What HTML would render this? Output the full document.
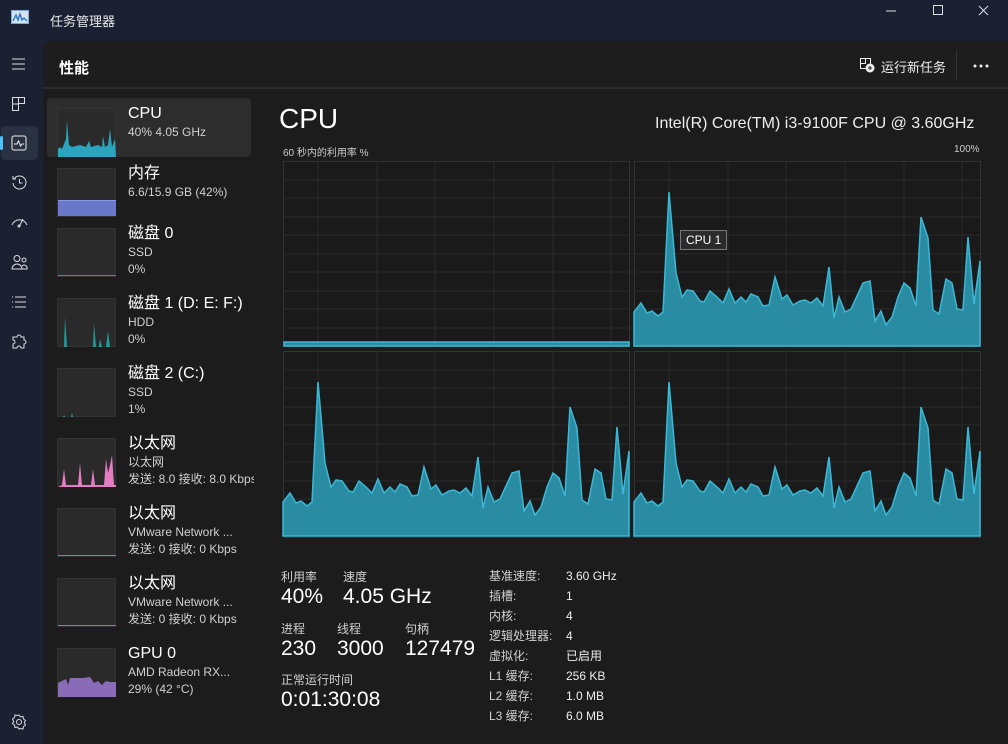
<!DOCTYPE html>
<html><head><meta charset="utf-8">
<style>
*{margin:0;padding:0;box-sizing:border-box}
body{width:1008px;height:744px;overflow:hidden;background:#1b2133;font-family:"Liberation Sans","Noto Sans CJK SC",sans-serif;color:#fff;position:relative}
.abs{position:absolute}
.panel{left:43px;top:41px;width:965px;height:703px;background:#1c1c1c;border-top-left-radius:8px}
.hdr{left:43px;top:41px;width:965px;height:48px;border-bottom:2px solid #2a2a2a;border-top-left-radius:8px;background:#1d1d1d}
.t{position:absolute;white-space:nowrap}
.nav svg{position:absolute;left:11px}
.item .th{position:absolute;left:57px;width:59px;height:49px;background:#2a2a2a;border:1px solid #333}
.item .t{line-height:20px}
.item .sm{line-height:15px}
.sm{font-size:12px;color:#d0d0d0}
.lbl{font-size:12px;color:#d0d0d0}
.big{font-size:21px;color:#fff}
</style></head><body>
<svg class="abs" style="left:11px;top:10px" width="18" height="14"><rect x="0.5" y="0.5" width="17" height="13" fill="#cfe3f5" stroke="#7fa8d0"/><polyline points="2,11 5,5 7,10 9,4 11,10 13,8 16,11" fill="none" stroke="#2a6fc0" stroke-width="1.3"/></svg>
<div class="t" style="left:50px;top:11px;font-size:13px;color:#e8e8e8">任务管理器</div>
<svg class="abs" style="left:886px;top:4px" width="110" height="14" stroke="#ddd" fill="none"><line x1="0" y1="7" x2="10" y2="7"/><rect x="47.5" y="1.5" width="9" height="9"/><path d="M93 2l9 9M102 2l-9 9"/></svg>
<div class="nav">
<svg style="top:57px" width="16" height="14" stroke="#ddd" fill="none"><path d="M1 2h13M1 7h13M1 12h13"/></svg>
<svg style="top:96px" width="16" height="16" stroke="#ddd" fill="none"><path d="M1.5 1.5h6v13h-6zM7.5 1.5h6v6h-6zM1.5 8h6"/></svg>
<div class="abs" style="left:1px;top:126px;width:37px;height:34px;background:#2a3142;border-radius:5px"></div>
<div class="abs" style="left:0;top:136px;width:3px;height:14px;background:#4cc2ff;border-radius:2px"></div>
<svg style="top:135px" width="16" height="16" stroke="#eee" fill="none"><rect x="1" y="1" width="14" height="14" rx="2"/><path d="M3 9h3l1.5-3 2 5 1.5-2h2"/></svg>
<svg style="top:174px" width="17" height="17" stroke="#ddd" fill="none"><path d="M3 5a6.5 6.5 0 1 1-1 4M2 2v3h3M8.5 5v4h3"/></svg>
<svg style="top:215px" width="17" height="14" stroke="#ddd" fill="none"><path d="M1 10a8 8 0 0 1 15 0M8 12l4-8"/><circle cx="8" cy="11" r="1"/></svg>
<svg style="top:254px" width="17" height="17" stroke="#ddd" fill="none"><circle cx="6" cy="4.5" r="3"/><circle cx="13" cy="6" r="2"/><path d="M1 15a5 5 0 0 1 10 0zM10 15h6a3 3 0 0 0-5-3"/></svg>
<svg style="top:295px" width="16" height="14" stroke="#ddd" fill="none"><path d="M1 2h1M1 7h1M1 12h1M4 2h11M4 7h11M4 12h11"/></svg>
<svg style="top:334px" width="17" height="17" stroke="#ddd" fill="none"><path d="M6 3a2 2 0 0 1 4 0h3v3a2 2 0 0 1 0 4v4h-3a2 2 0 0 0-4 0H2v-4a2 2 0 0 0 0-4V3z"/></svg>
<svg style="top:714px" width="16" height="16" stroke="#ddd" fill="none"><circle cx="8" cy="8" r="2.5"/><path d="M8 1l1.5 2 2.5-.5.5 2.5 2 1.5-1.2 2.2 1.2 2.3-2 1.5-.5 2.5-2.5-.5L8 15l-1.5-2-2.5.5-.5-2.5-2-1.5 1.2-2.3L1.5 5l2-1.5.5-2.5 2.5.5z"/></svg>
</div>
<div class="abs panel"></div>
<div class="abs hdr"></div>
<div class="t" style="left:59px;top:57px;font-size:15px;font-weight:bold">性能</div>
<svg class="abs" style="left:859px;top:57px" width="16" height="16" stroke="#eee" fill="none"><path d="M1.5 1.5h5v5h-5zM6.5 1.5h5v5M1.5 6.5v5h5"/><circle cx="11" cy="11" r="4" fill="#eee"/><path d="M11 9v4M9 11h4" stroke="#1d1d1d"/></svg>
<div class="t" style="left:881px;top:57px;font-size:13px;color:#eee">运行新任务</div>
<div class="abs" style="left:956px;top:50px;width:1px;height:30px;background:#333"></div>
<svg class="abs" style="left:973px;top:64px" width="18" height="4" fill="#eee"><circle cx="2" cy="2" r="1.5"/><circle cx="8" cy="2" r="1.5"/><circle cx="14" cy="2" r="1.5"/></svg>
<div class="abs" style="left:47px;top:98px;width:204px;height:59px;background:#2d2d2d;border-radius:4px"></div>
<div class="item">
<div class="th" style="top:108px"><svg width="59" height="49"><polygon points="0,48 0,40 2,38 4,40 8,30 9,12 11,36 14,38 22,36 28,38 31,32 33,38 40,36 44,38 45,27 47,38 50,36 52,20 54,38 57,30 58,48" fill="#2aa5bd"/></svg></div>
<div class="t" style="left:128px;top:104px;font-size:16px">CPU</div>
<div class="t sm" style="left:128px;top:125px">40% 4.05 GHz</div>
<div class="th" style="top:168px"><div class="abs" style="left:0;bottom:0;width:58px;height:16px;background:#6a78c9;border-top:1px solid #8a97e8"></div></div>
<div class="t" style="left:128px;top:164px;font-size:16px">内存</div>
<div class="t sm" style="left:128px;top:185px">6.6/15.9 GB (42%)</div>
<div class="th" style="top:228px"><div class="abs" style="left:0;bottom:0;width:58px;height:1px;background:#2a9a9a"></div></div>
<div class="t" style="left:128px;top:224px;font-size:16px">磁盘 0</div>
<div class="t sm" style="left:128px;top:245px">SSD</div><div class="t sm" style="left:128px;top:262px">0%</div>
<div class="th" style="top:298px"><svg width="59" height="49"><polygon points="0,48 6,48 7,18 9,48 35,48 36,24 38,48 41,48 42,40 44,48 48,48 50,32 52,48 58,48" fill="#1f9e9e"/></svg></div>
<div class="t" style="left:128px;top:294px;font-size:16px">磁盘 1 (D: E: F:)</div>
<div class="t sm" style="left:128px;top:315px">HDD</div><div class="t sm" style="left:128px;top:332px">0%</div>
<div class="th" style="top:368px"><svg width="59" height="49"><polygon points="0,48 5,48 6,46 7,48 13,48 14,44 15,48 58,48" fill="#1f9e9e"/></svg></div>
<div class="t" style="left:128px;top:364px;font-size:16px">磁盘 2 (C:)</div>
<div class="t sm" style="left:128px;top:385px">SSD</div><div class="t sm" style="left:128px;top:402px">1%</div>
<div class="th" style="top:438px"><svg width="59" height="49"><polygon points="0,48 4,46 6,30 8,46 20,46 22,24 24,46 33,46 35,30 37,46 46,46 48,20 50,34 52,26 54,16 56,46 58,46 58,48" fill="#e47cc4"/></svg></div>
<div class="t" style="left:128px;top:434px;font-size:16px">以太网</div>
<div class="t sm" style="left:128px;top:455px">以太网</div>
<div class="t sm" style="left:128px;top:472px;width:126px;overflow:hidden">发送: 8.0 接收: 8.0 Kbps</div>
<div class="th" style="top:508px"><div class="abs" style="left:0;bottom:0;width:58px;height:1px;background:#c060a0"></div></div>
<div class="t" style="left:128px;top:504px;font-size:16px">以太网</div>
<div class="t sm" style="left:128px;top:525px">VMware Network ...</div>
<div class="t sm" style="left:128px;top:542px">发送: 0 接收: 0 Kbps</div>
<div class="th" style="top:578px"><div class="abs" style="left:0;bottom:0;width:58px;height:1px;background:#c060a0"></div></div>
<div class="t" style="left:128px;top:574px;font-size:16px">以太网</div>
<div class="t sm" style="left:128px;top:595px">VMware Network ...</div>
<div class="t sm" style="left:128px;top:612px">发送: 0 接收: 0 Kbps</div>
<div class="th" style="top:648px"><svg width="59" height="49"><polygon points="0,48 0,34 4,32 8,30 10,36 12,29 25,29 32,28 36,34 40,32 44,36 48,32 52,33 58,33 58,48" fill="#8a6bb8"/></svg></div>
<div class="t" style="left:128px;top:644px;font-size:16px">GPU 0</div>
<div class="t sm" style="left:128px;top:665px">AMD Radeon RX...</div>
<div class="t sm" style="left:128px;top:682px">29% (42 °C)</div>
</div>
<div class="t" style="left:279px;top:103px;font-size:28px">CPU</div>
<div class="t" style="left:655px;top:115px;font-size:16px;color:#eee">Intel(R) Core(TM) i3-9100F CPU @ 3.60GHz</div>
<div class="t" style="left:283px;top:144px;font-size:10px;color:#ccc">60 秒内的利用率 %</div>
<div class="t" style="left:954px;top:144px;font-size:10px;color:#ccc">100%</div>
<svg class="abs" style="left:0;top:0" width="1008" height="744">
<defs>
<pattern id="g" x="283" y="161" width="346" height="186" patternUnits="userSpaceOnUse">
<g stroke="#2b2b2b" stroke-width="1">
<path d="M35 0v186M94 0v186M152 0v186M211 0v186M270 0v186M328 0v186"/>
<path d="M0 19h346M0 37h346M0 56h346M0 74h346M0 93h346M0 111h346M0 130h346M0 148h346M0 167h346"/>
</g></pattern>
<polygon id="p" points="634,346 634,312 641,303 647,313 652,311 658,316 663,312 669,192 676,273 682,297 687,290 693,291 700,301 704,302 710,291 717,297 723,303 729,289 735,303 741,297 746,302 751,294 758,297 763,306 769,305 775,277 782,299 787,295 793,305 800,301 805,300 811,303 817,298 823,306 829,267 834,318 839,297 845,312 851,309 857,296 863,283 870,281 875,321 881,311 886,325 892,317 898,297 904,283 910,288 916,306 921,217 928,238 933,310 939,314 946,279 952,283 957,309 963,310 968,237 974,304 980,261 980,346"/>
</defs>
<g fill="#1a1a1a" stroke="#333">
<rect x="283.5" y="161.5" width="346" height="185"/><rect x="634.5" y="161.5" width="346" height="185"/>
<rect x="283.5" y="351.5" width="346" height="186"/><rect x="634.5" y="351.5" width="346" height="186"/>
</g>
<rect x="283" y="161" width="346" height="186" fill="url(#g)"/>
<g transform="translate(351,0)"><rect x="283" y="161" width="346" height="186" fill="url(#g)"/></g>
<g transform="translate(0,190)"><rect x="283" y="161" width="346" height="186" fill="url(#g)"/></g>
<g transform="translate(351,190)"><rect x="283" y="161" width="346" height="186" fill="url(#g)"/></g>
<g fill="#2a8ca3" stroke="#3bb8d6" stroke-width="1.5">
<rect x="284" y="342" width="345" height="4"/>
<use href="#p"/>
<use href="#p" transform="translate(-351,190)"/>
<use href="#p" transform="translate(0,190)"/>
</g>
</svg>
<div class="t" style="left:680px;top:230px;padding:2px 5px;border:1px solid #777;background:#2b2b2b;font-size:12px">CPU 1</div>
<div class="t lbl" style="left:281px;top:568px">利用率</div>
<div class="t lbl" style="left:343px;top:568px">速度</div>
<div class="t big" style="left:281px;top:585px">40%</div>
<div class="t big" style="left:343px;top:585px">4.05 GHz</div>
<div class="t lbl" style="left:281px;top:620px">进程</div>
<div class="t lbl" style="left:337px;top:620px">线程</div>
<div class="t lbl" style="left:405px;top:620px">句柄</div>
<div class="t big" style="left:281px;top:637px">230</div>
<div class="t big" style="left:337px;top:637px">3000</div>
<div class="t big" style="left:405px;top:637px">127479</div>
<div class="t lbl" style="left:281px;top:671px">正常运行时间</div>
<div class="t big" style="left:281px;top:688px">0:01:30:08</div>
<div class="t lbl" style="left:489px;top:566px;line-height:20px">基准速度:<br>插槽:<br>内核:<br>逻辑处理器:<br>虚拟化:<br>L1 缓存:<br>L2 缓存:<br>L3 缓存:</div>
<div class="t lbl" style="left:566px;top:566px;line-height:20px;color:#eee">3.60 GHz<br>1<br>4<br>4<br>已启用<br>256 KB<br>1.0 MB<br>6.0 MB</div>
</body></html>
